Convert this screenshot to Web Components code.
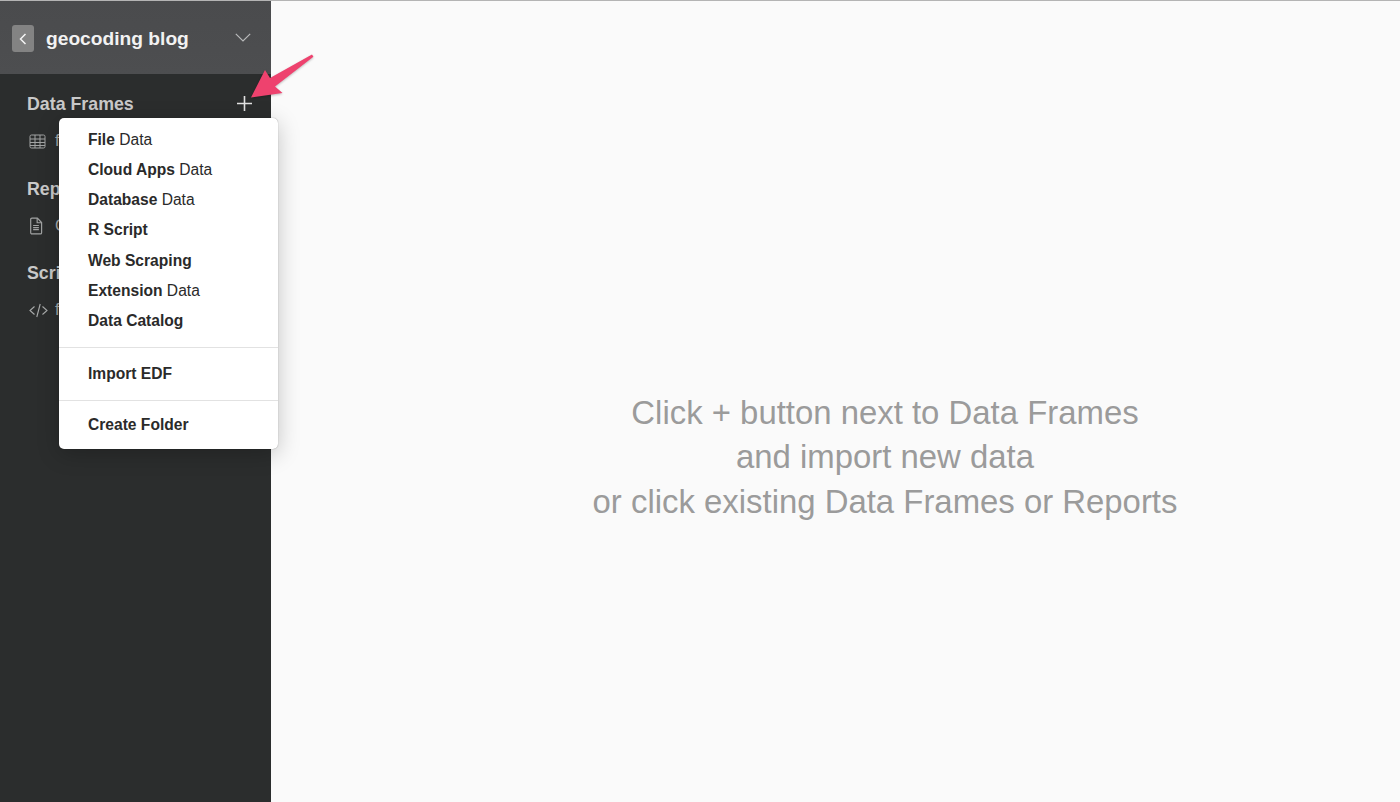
<!DOCTYPE html>
<html>
<head>
<meta charset="utf-8">
<title>geocoding blog</title>
<style>
  html, body { margin: 0; height: 100%; }
  body { font-family: "Liberation Sans", Arial, sans-serif; overflow: hidden; }
</style>
</head>
<body>
<app-shell>
  <side-bar slot="side" title-text="geocoding blog">
    <side-section label="Data Frames" plus>
      <side-item icon="table">f</side-item>
    </side-section>
    <side-section label="Reports">
      <side-item icon="doc">C</side-item>
    </side-section>
    <side-section label="Scripts">
      <side-item icon="code">f</side-item>
    </side-section>
  </side-bar>
  <empty-hint slot="main">
    <div>Click + button next to Data Frames</div>
    <div>and import new data</div>
    <div>or click existing Data Frames or Reports</div>
  </empty-hint>
  <pop-menu slot="over">
    <menu-item><b>File</b> Data</menu-item>
    <menu-item><b>Cloud Apps</b> Data</menu-item>
    <menu-item><b>Database</b> Data</menu-item>
    <menu-item><b>R Script</b></menu-item>
    <menu-item><b>Web Scraping</b></menu-item>
    <menu-item><b>Extension</b> Data</menu-item>
    <menu-item><b>Data Catalog</b></menu-item>
    <menu-line></menu-line>
    <menu-item><b>Import EDF</b></menu-item>
    <menu-line class="last"></menu-line>
    <menu-item><b>Create Folder</b></menu-item>
  </pop-menu>
  <pink-arrow slot="over"></pink-arrow>
</app-shell>

<script>
const icons = {
  table: `<svg width="17" height="15" viewBox="0 0 17 15" fill="none" stroke="#a2a4a4" stroke-width="1"><rect x="1" y="1" width="15" height="13" rx="1.5"/><path d="M1 5h15M1 8.5h15M1 11.5h15M6 1v13M11 1v13"/></svg>`,
  doc: `<svg width="14" height="18" viewBox="0 0 13 17" fill="none" stroke="#a2a4a4" stroke-width="1.1"><path d="M1.5 2.2c0-.7.5-1.2 1.2-1.2h5.1l4 4.2v9.6c0 .7-.5 1.2-1.2 1.2H2.7c-.7 0-1.2-.5-1.2-1.2z"/><path d="M7.6 1.2v4.2h4M3.8 8h5.4M3.8 10h5.4M3.8 12h5.4"/></svg>`,
  code: `<svg width="19" height="15" viewBox="0 0 19 15" fill="none" stroke="#a9abab" stroke-width="1.1"><path d="M5.5 3.5 1 7.5l4.5 4M13.5 3.5l4.5 4-4.5 4M11.2 1 7.8 14"/></svg>`
};

class AppShell extends HTMLElement {
  constructor() {
    super();
    this.attachShadow({ mode: 'open' });
    this.shadowRoot.innerHTML = `
      <style>
        :host { display: block; position: relative; width: 1400px; height: 802px; overflow: hidden; }
        .frame { display: grid; grid-template-columns: 271px 1fr; height: 100%; background: #fafafa; }
        .top { height: 1px; background: #b4b4b4; position: absolute; left: 0; right: 0; top: 0; }
      </style>
      <div class="frame">
        <slot name="side"></slot>
        <slot name="main"></slot>
      </div>
      <div class="top"></div>
      <slot name="over"></slot>
    `;
  }
}

class SideBar extends HTMLElement {
  constructor() {
    super();
    this.attachShadow({ mode: 'open' });
    this.shadowRoot.innerHTML = `
      <style>
        :host { display: flex; flex-direction: column; background: #2b2d2d; height: 802px; }
        header {
          height: 74px; box-sizing: border-box; padding: 0 20px 0 12px;
          display: flex; align-items: center;
          background: linear-gradient(#4a4b4d, #4d4e50);
        }
        .back {
          width: 22px; height: 27px; border-radius: 3px; background: #838383;
          display: flex; align-items: center; justify-content: center; margin-top: 3px;
        }
        h1 { margin: 4px 0 0 12px; flex: 1; font-size: 19.2px; font-weight: bold; color: #f2f2f2; }
        .body { padding-top: 18.5px; display: flex; flex-direction: column; gap: 24px; }
      </style>
      <header>
        <div class="back"><svg width="8" height="12" viewBox="0 0 8 12" fill="none" stroke="#f4f4f4" stroke-width="1.5"><path d="M6.5 1 1.5 6l5 5"/></svg></div>
        <h1></h1>
        <svg width="16" height="9" viewBox="0 0 16 9" fill="none" stroke="#b9babb" stroke-width="1.2"><path d="M.8.8 8 8l7.2-7.2"/></svg>
      </header>
      <div class="body"><slot></slot></div>
    `;
    this.shadowRoot.querySelector('h1').textContent = this.getAttribute('title-text');
  }
}

class SideSection extends HTMLElement {
  constructor() {
    super();
    this.attachShadow({ mode: 'open' });
    const plus = this.hasAttribute('plus')
      ? `<svg width="15" height="15" viewBox="0 0 15 15" stroke="#e2e2e2" stroke-width="1.6"><path d="M7.5 0v15M0 7.5h15"/></svg>` : '';
    this.shadowRoot.innerHTML = `
      <style>
        :host { display: block; }
        .head {
          display: flex; align-items: center; justify-content: space-between;
          height: 24px; padding: 0 19px 0 27px;
          font-size: 17.8px; font-weight: bold; color: #c9c9c9;
        }
        .head svg { margin-top: -3px; }
        .items { margin-top: 12.5px; }
      </style>
      <div class="head"><span></span>${plus}</div>
      <div class="items"><slot></slot></div>
    `;
    this.shadowRoot.querySelector('span').textContent = this.getAttribute('label');
  }
}

class SideItem extends HTMLElement {
  constructor() {
    super();
    this.attachShadow({ mode: 'open' });
    this.shadowRoot.innerHTML = `
      <style>
        :host { display: flex; align-items: center; height: 24px; padding-left: 29px; color: #a9abab; font-size: 16px; }
        .ic { width: 26px; display: flex; align-items: center; }
      </style>
      <span class="ic">${icons[this.getAttribute('icon')] || ''}</span><slot></slot>
    `;
  }
}

class EmptyHint extends HTMLElement {
  constructor() {
    super();
    this.attachShadow({ mode: 'open' });
    this.shadowRoot.innerHTML = `
      <style>
        :host {
          display: flex; flex-direction: column; justify-content: center; align-items: center;
          height: 802px; padding: 113px 0 0 99px; box-sizing: border-box;
          font-size: 32.9px; line-height: 44.5px; color: #9b9b9b; text-align: center;
        }
      </style>
      <slot></slot>
    `;
  }
}

class PopMenu extends HTMLElement {
  constructor() {
    super();
    this.attachShadow({ mode: 'open' });
    this.shadowRoot.innerHTML = `
      <style>
        :host {
          position: absolute; left: 59px; top: 118px; width: 219px; height: 331px;
          box-sizing: border-box; padding: 6.8px 0 0; background: #fff; border-radius: 5px;
          box-shadow: 0 0 1px rgba(0,0,0,.45), 0 5px 22px rgba(0,0,0,.22);
        }
      </style>
      <slot></slot>
    `;
  }
}

class MenuItem extends HTMLElement {
  constructor() {
    super();
    this.attachShadow({ mode: 'open' });
    this.shadowRoot.innerHTML = `
      <style>
        :host {
          display: flex; align-items: center; height: 30.2px; padding-left: 29px;
          font-size: 15.6px; color: #2a2a2a; white-space: pre;
        }
      </style>
      <span><slot></slot></span>
    `;
  }
}

class MenuLine extends HTMLElement {
  constructor() {
    super();
    this.attachShadow({ mode: 'open' });
    this.shadowRoot.innerHTML = `
      <style>
        :host { display: block; height: 1px; background: #e2e2e2; margin: 11px 0; }
        :host(.last) { margin: 10.5px 0 9px; }
      </style>
    `;
  }
}

class PinkArrow extends HTMLElement {
  constructor() {
    super();
    this.attachShadow({ mode: 'open' });
    this.shadowRoot.innerHTML = `
      <style>
        :host { position: absolute; left: 245px; top: 50px; width: 72px; height: 52px; }
        svg { display: block; filter: drop-shadow(0 1px 1px rgba(0,0,0,.25)); }
      </style>
      <svg width="72" height="52" viewBox="0 0 72 52">
        <path d="M67 4.5 68.4 6.8 30 36.5 37.5 43 6 47.5 20 20 25 28z" fill="#ee426e"/>
      </svg>
    `;
  }
}

customElements.define('app-shell', AppShell);
customElements.define('side-bar', SideBar);
customElements.define('side-section', SideSection);
customElements.define('side-item', SideItem);
customElements.define('empty-hint', EmptyHint);
customElements.define('pop-menu', PopMenu);
customElements.define('menu-item', MenuItem);
customElements.define('menu-line', MenuLine);
customElements.define('pink-arrow', PinkArrow);
</script>
</body>
</html>
